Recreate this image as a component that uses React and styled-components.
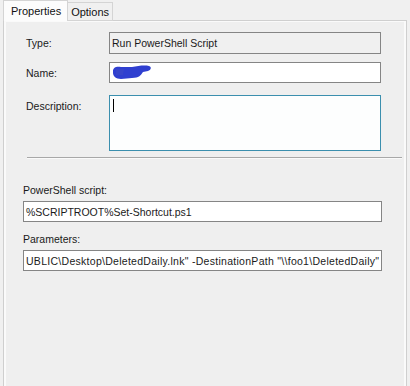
import React from "react";
import styled, { createGlobalStyle } from "styled-components";

const Global = createGlobalStyle`
  html, body { margin: 0; padding: 0; background: #f0f0f0; }
  body { font-family: "Liberation Sans", Arial, sans-serif; font-size: 10.5px; color: #1a1a1a; }
  * { box-sizing: border-box; }
`;

const Window = styled.div`
  width: 410px;
  height: 386px;
  background: #f0f0f0;
  display: flex;
  flex-direction: column;
  padding: 0 3px 0 3px;
`;

const TabStrip = styled.div`
  display: flex;
  align-items: flex-end;
  height: 21px;
  position: relative;
  z-index: 1;
  margin-bottom: -1px;
`;

const Tab = styled.div`
  height: ${(p) => (p.$active ? "21px" : "19px")};
  padding: 0 ${(p) => (p.$active ? "6px" : "3px")} 0 ${(p) => (p.$active ? "7px" : "3px")};
  display: flex;
  align-items: center;
  background: ${(p) => (p.$active ? "#fcfcfc" : "#f0f0f0")};
  border: 1px solid #d4d4d4;
  border-bottom: ${(p) => (p.$active ? "none" : "1px solid #d4d4d4")};
  margin-left: ${(p) => (p.$active ? "0" : "-1px")};
  font-size: 11px;
  color: #111;
`;

const Panel = styled.div`
  flex: 1;
  border: 1px solid #cfcfcf;
  border-bottom: none;
  box-shadow: inset 2px 1px 0 #fafafa, inset -2px 0 0 #fafafa;
  background: #efefef;
  padding: 11px 4px 0 19px;
  display: flex;
  flex-direction: column;
`;

const Row = styled.div`
  display: grid;
  grid-template-columns: 86px 272px;
  align-items: ${(p) => (p.$top ? "start" : "center")};
  margin-bottom: ${(p) => p.$mb || 0}px;
`;

const Label = styled.div`
  padding-left: 3px;
  padding-top: ${(p) => (p.$top ? "5px" : "0")};
  font-size: 10.5px;
  color: #1a1a1a;
`;

const Field = styled.div`
  height: ${(p) => p.$h || 21}px;
  width: ${(p) => p.$w || 272}px;
  border: 1px solid ${(p) => (p.$focus ? "#3b8fae" : "#858585")};
  background: ${(p) => (p.$readonly ? "#f0f0f0" : p.$focus ? "#fdfefe" : "#fff")};
  display: flex;
  align-items: ${(p) => (p.$focus ? "flex-start" : "center")};
  padding: ${(p) => (p.$focus ? "3px 2px" : "0 2px")};
  font-size: 10.5px;
  letter-spacing: ${(p) => p.$ls || 0}px;
  color: #1a1a1a;
  white-space: nowrap;
  overflow: hidden;
`;

const Caret = styled.span`
  display: block;
  width: 1px;
  height: 13px;
  background: #000;
  margin-left: 1px;
`;

const Separator = styled.div`
  height: 1px;
  background: #a8a8a8;
  margin: 6px 0 26px 4px;
  box-shadow: 0 1px 0 #fafafa;
`;

const Stack = styled.div`
  display: flex;
  flex-direction: column;
  margin-bottom: ${(p) => p.$mb || 0}px;
`;

const StackLabel = styled.div`
  font-size: 10.5px;
  color: #1a1a1a;
  margin-bottom: ${(p) => p.$mb || 4}px;
`;

const Scribble = () => (
  <svg width="40" height="15" viewBox="0 0 40 15">
    <path
      d="M1 6 C1 2 5 1 9 2 L20 2 C26 1 32 0 37 1 C40 2 39 5 36 6 L31 7 C29 10 27 13 20 13 L9 14 C4 14 1 11 1 8 Z"
      fill="#2f3fd0"
    />
    <path d="M4 4 L12 4 L11 10 L4 10 Z" fill="#3a48c8" opacity="0.7" />
  </svg>
);

export default function App() {
  return (
    <>
      <Global />
      <Window>
        <TabStrip>
          <Tab $active>Properties</Tab>
          <Tab>Options</Tab>
        </TabStrip>
        <Panel>
          <Row $mb={8}>
            <Label>Type:</Label>
            <Field $readonly $h={22}>Run PowerShell Script</Field>
          </Row>
          <Row $mb={12}>
            <Label>Name:</Label>
            <Field $h={21}>
              <Scribble />
            </Field>
          </Row>
          <Row $top>
            <Label $top>Description:</Label>
            <Field $focus $h={56}>
              <Caret />
            </Field>
          </Row>
          <Separator />
          <Stack $mb={11}>
            <StackLabel $mb={5}>PowerShell script:</StackLabel>
            <Field $w={359}>%SCRIPTROOT%Set-Shortcut.ps1</Field>
          </Stack>
          <Stack>
            <StackLabel $mb={5}>Parameters:</StackLabel>
            <Field $w={359} $ls={0.28}>
              UBLIC\Desktop\DeletedDaily.lnk" -DestinationPath "\\foo1\DeletedDaily"
            </Field>
          </Stack>
        </Panel>
      </Window>
    </>
  );
}
